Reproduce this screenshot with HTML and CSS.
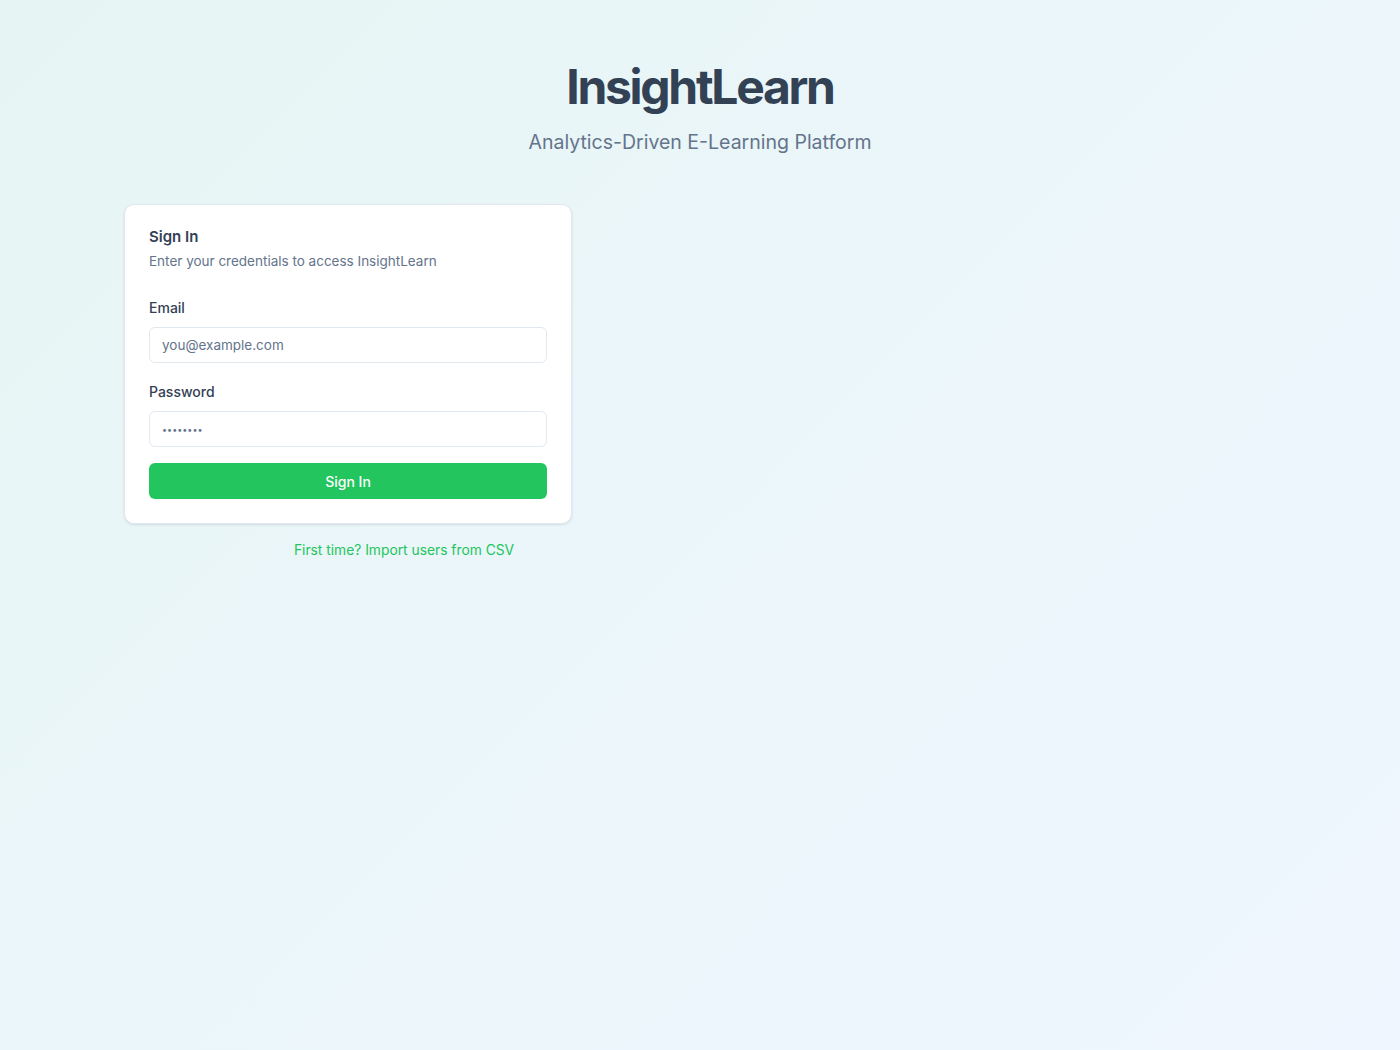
FILE: index.html
```html
<!DOCTYPE html>
<html lang="en">
<head>
<meta charset="utf-8">
<title>InsightLearn</title>
<link rel="stylesheet" href="styles.css">
</head>
<body>
<main class="page">
  <header class="hero">
    <h1 class="brand">InsightLearn</h1>
    <p class="tagline">Analytics-Driven E-Learning Platform</p>
  </header>
  <div class="grid">
    <section class="col">
      <div class="card">
        <h2 class="card-title">Sign In</h2>
        <p class="card-desc">Enter your credentials to access InsightLearn</p>
        <form class="form">
          <div class="field">
            <label class="label" for="email">Email</label>
            <input class="input" id="email" type="email" placeholder="you@example.com">
          </div>
          <div class="field">
            <label class="label" for="password">Password</label>
            <input class="input input-password" id="password" type="password" value="password">
          </div>
          <button class="btn" type="button">Sign In</button>
        </form>
      </div>
      <div class="import"><a class="link" href="#">First time? Import users from CSV</a></div>
    </section>
    <section class="col"></section>
  </div>
</main>
</body>
</html>
```
FILE: styles.css
```css
* { box-sizing: border-box; }
html, body { margin: 0; padding: 0; }
body {
  min-height: 1050px;
  font-family: Inter, "Liberation Sans", sans-serif;
  background: linear-gradient(135deg, #e6f5f3 0%, #ebf6fa 50%, #eff6ff 100%);
  color: #334155;
}
.page {
  max-width: 1152px;
  margin: 0 auto;
  padding-top: 62px;
}
.hero { text-align: center; }
.brand {
  margin: 0;
  font-size: 48px;
  line-height: 50px;
  font-weight: 700;
  letter-spacing: -2.3px;
  color: #334155;
}
.tagline {
  margin: 16px 0 0;
  font-size: 19.5px;
  line-height: 28px;
  color: #64748b;
}
.grid {
  margin-top: 48px;
  display: grid;
  grid-template-columns: 1fr 1fr;
  gap: 32px;
}
.card {
  width: 448px;
  background: #fff;
  border: 1px solid #e2e8f0;
  border-radius: 10px;
  box-shadow: 0 1px 3px rgba(15, 23, 42, 0.08), 0 1px 2px rgba(15, 23, 42, 0.04);
  padding: 22px 24px 24px;
}
.card-title {
  margin: 0;
  font-size: 15px;
  line-height: 20px;
  font-weight: 600;
  color: #334155;
}
.card-desc {
  margin: 4px 0 0;
  font-size: 13.5px;
  line-height: 20px;
  color: #64748b;
}
.form {
  margin-top: 29px;
  display: flex;
  flex-direction: column;
  gap: 21px;
}
.field { display: flex; flex-direction: column; gap: 11px; }
.form .btn { margin-top: -5px; }
.label {
  font-size: 14px;
  line-height: 16px;
  font-weight: 500;
  color: #334155;
}
.input {
  width: 100%;
  height: 36px;
  border: 1px solid #e2e8f0;
  border-radius: 6px;
  padding: 0 12px;
  font-family: inherit;
  font-size: 13.5px;
  color: #475569;
  background: #fff;
  outline: none;
}
.input-password {
  font-size: 9px;
  color: #64748b;
}
.input::placeholder { color: #64748b; }
.btn {
  height: 36px;
  border: 0;
  border-radius: 6px;
  background: #22c55e;
  color: #fff;
  font-family: inherit;
  font-size: 14px;
  font-weight: 500;
}
.import {
  margin-top: 15px;
  text-align: center;
}
.link {
  color: #22c55e;
  font-size: 13.8px;
  line-height: 20px;
  text-decoration: none;
}
```
